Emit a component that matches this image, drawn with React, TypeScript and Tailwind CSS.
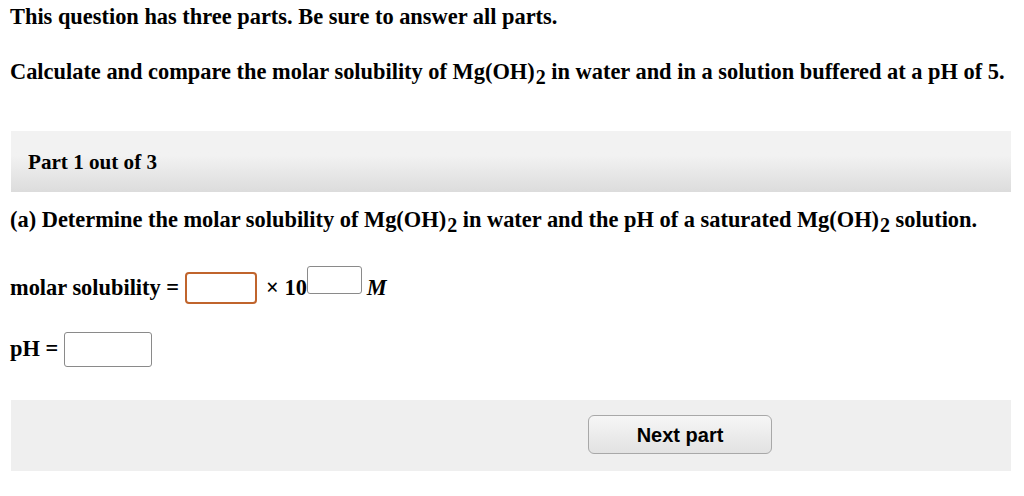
import React from "react";

export default function App() {
  const serif = { fontFamily: '"Liberation Serif", "Times New Roman", serif' };
  const Sub = () => (
    <sub className="text-[20px] relative top-[5px] align-baseline ml-[1px]">2</sub>
  );
  return (
    <div className="w-[1024px] h-[496px] bg-white text-black overflow-hidden relative" style={serif}>
      <div className="pl-[10px] pt-[4px] text-[22.4px] font-bold leading-[26px] whitespace-nowrap">
        This question has three parts. Be sure to answer all parts.
      </div>
      <div className="pl-[10px] mt-[29px] text-[22.4px] font-bold leading-[26px] whitespace-nowrap">
        Calculate and compare the molar solubility of Mg(OH)<Sub /> in water and in a solution buffered at a pH of 5.
      </div>
      <div className="ml-[11px] mr-[13px] mt-[46px] h-[61px] bg-gradient-to-b from-[#f2f2f2] from-40% to-[#dcdcdc] flex items-center pl-[17px]">
        <span className="text-[22px] font-bold scale-x-[0.96] origin-left inline-block">Part 1 out of 3</span>
      </div>
      <div className="pl-[10px] pt-[15px] text-[22.4px] font-bold leading-[26px] whitespace-nowrap">
        (a) Determine the molar solubility of Mg(OH)<Sub /> in water and the pH of a saturated Mg(OH)<Sub /> solution.
      </div>
      <div className="pl-[10px] mt-[35px] flex items-center h-[40px] text-[22.4px] font-bold">
        <span>molar solubility =</span>
        <div className="ml-[6px] w-[72px] h-[32px] border-[2.5px] border-[#c0642c] rounded-[4px]" />
        <span className="ml-[9px]">× 10</span>
        <div className="w-[55px] h-[28px] border border-[#8a8a8a] rounded-[3px] -mt-[16px]" />
        <span className="ml-[5px] italic">M</span>
      </div>
      <div className="pl-[10px] mt-[23px] flex items-center h-[36px] text-[22.4px] font-bold">
        <span>pH =</span>
        <div className="ml-[6px] w-[88px] h-[35px] border border-[#8a8a8a] rounded-[3px]" />
      </div>
      <div className="ml-[11px] mr-[13px] mt-[33px] h-[71px] bg-[#efefef] flex items-center justify-end pr-[239px]">
        <button
          className="w-[184px] h-[39px] rounded-[6px] border border-[#a8a8a8] bg-gradient-to-b from-[#f6f6f6] to-[#e2e2e2] text-[20px] font-bold -mt-[2px]"
          style={{ fontFamily: '"Liberation Sans", Arial, sans-serif' }}
        >
          Next part
        </button>
      </div>
    </div>
  );
}
